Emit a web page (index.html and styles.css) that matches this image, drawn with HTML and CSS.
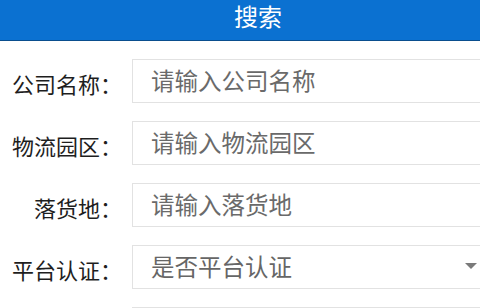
FILE: index.html
```html
<!DOCTYPE html>
<html lang="zh-CN">
<head>
<meta charset="utf-8">
<title>搜索</title>
<link rel="stylesheet" href="styles.css">
</head>
<body>
<header class="topbar"><span class="title">搜索</span></header>
<form class="form">
  <div class="row">
    <label class="label">公司名称：</label>
    <input class="field" type="text" placeholder="请输入公司名称">
  </div>
  <div class="row">
    <label class="label">物流园区：</label>
    <input class="field" type="text" placeholder="请输入物流园区">
  </div>
  <div class="row">
    <label class="label">落货地：</label>
    <input class="field" type="text" placeholder="请输入落货地">
  </div>
  <div class="row">
    <label class="label">平台认证：</label>
    <div class="field select"><span class="select-text">是否平台认证</span><span class="caret"></span></div>
  </div>
  <div class="row">
    <label class="label"></label>
    <div class="field"></div>
  </div>
</form>
</body>
</html>
```
FILE: styles.css
```css
html, body {
  margin: 0;
  padding: 0;
  background: #ffffff;
  overflow: hidden;
  font-family: "Noto Sans CJK SC", "Noto Sans", sans-serif;
}
.topbar {
  height: 40px;
  box-sizing: content-box;
  background: #0b71d1;
  border-bottom: 1px solid #0a4e8e;
  display: flex;
  align-items: flex-start;
  justify-content: center;
  padding-left: 36px;
}
.title {
  color: #ffffff;
  font-size: 24px;
  line-height: 30px;
  padding-top: 1px;
}
.form {
  margin: 0;
  padding-top: 18px;
}
.row {
  display: flex;
  align-items: stretch;
  height: 44px;
  margin-bottom: 18px;
}
.label {
  width: 132px;
  flex: none;
  box-sizing: border-box;
  padding-right: 10px;
  text-align: right;
  font-size: 22px;
  line-height: 48px;
  color: #1e1e1e;
}
.field {
  flex: none;
  width: 352px;
  height: 44px;
  box-sizing: border-box;
  margin: 0;
  border: 1px solid #e2e2e2;
  background: #ffffff;
  padding: 0 0 2px 18px;
  font-family: "Noto Sans CJK SC", "Noto Sans", sans-serif;
  font-size: 23.5px;
  color: #666666;
  outline: none;
}
.field::placeholder {
  color: #6a6a6a;
  opacity: 1;
}
.select {
  display: flex;
  align-items: center;
  justify-content: space-between;
  padding-right: 10px;
}
.select-text {
  line-height: 30px;
  margin-top: -1px;
}
.caret {
  width: 0;
  height: 0;
  border-left: 6px solid transparent;
  border-right: 6px solid transparent;
  border-top: 6px solid #7a7a7a;
  margin-right: -4px;
}
```
